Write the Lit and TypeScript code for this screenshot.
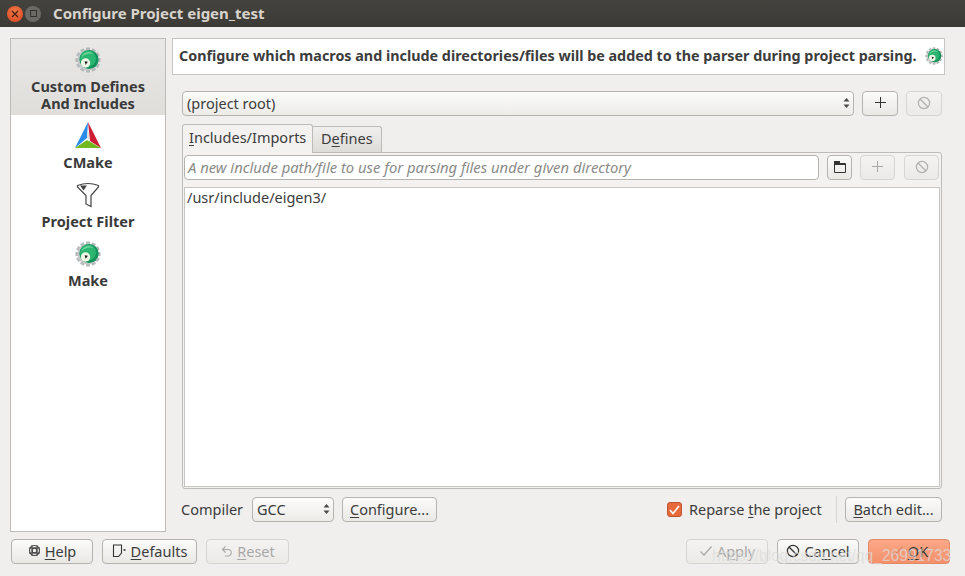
import { LitElement, html, css, svg } from "lit";
import { customElement } from "lit/decorators.js";

const gear = (size: number) => {
  const teeth = Array.from({ length: 12 }, (_, i) => i * 30);
  return html`<svg class="ico" width=${size} height=${size} viewBox="0 0 26 26">
    ${teeth.map((a) => svg`<rect x="11" y="0.5" width="4" height="5" fill="#b4b8ba" transform="rotate(${a} 13 13)"/>`)}
    <circle cx="13" cy="13" r="10.5" fill="#c6c9ca"/>
    <circle cx="14" cy="12.5" r="9.6" fill="#12935a"/>
    <circle cx="13" cy="11.5" r="8" fill="#2bb571"/>
    <path d="M6.5 11a7 6.5 0 0 1 12 -4a9 6 0 0 0 -12 4z" fill="#6fd69a"/>
    <circle cx="10.5" cy="16" r="4.7" fill="#eef6e6"/>
    <path d="M9.6 14.2l3.3 .5l-2.2 3z" fill="#1d1d1d"/>
  </svg>`;
};
const cmake = html`<svg class="ico" width="28" height="28" viewBox="0 0 28 28">
  <path d="M14 1L1 27L13 17z" fill="#2a8ce8"/>
  <path d="M14 1L27 27L16 20z" fill="#cc1f36"/>
  <path d="M1 27H27L13 19z" fill="#72b81f"/>
  <path d="M14 9L13 17L16 20z" fill="#dcdcdc"/>
</svg>`;
const funnel = html`<svg class="ico" width="24" height="26" viewBox="0 0 24 26" fill="none">
  <path d="M1.5 3.5Q12 -.5 22.5 3.5V5L15 13.5V24.5L10 22V13.5L1.5 5z" fill="#fff" stroke="#444" stroke-width="1.2"/>
  <path d="M4 3.5H11L7.5 8.5z" fill="#444"/>
</svg>`;
const plus = (c: string) => html`<svg width="13" height="13" viewBox="0 0 13 13"><path d="M6.5 1v11M1 6.5h11" stroke=${c} stroke-width="1"/></svg>`;
const ban = (c: string, s = 14) => html`<svg width=${s} height=${s} viewBox="0 0 14 14" fill="none" stroke=${c} stroke-width="1.2"><circle cx="7" cy="7" r="5.6"/><path d="M3 3l8 8"/></svg>`;
const spin = html`<svg class="spin" width="7" height="14" viewBox="0 0 7 14"><path d="M3.5 2L6.5 5.5H.5zM3.5 12L.5 8.5H6.5z" fill="#4a4a4a"/></svg>`;
const folder = html`<svg width="14" height="14" viewBox="0 0 14 14" fill="none" stroke="#333"><path d="M1.5 12.5V1.5H6.5V3.5H12.5V12.5zM1.5 4.5H12.5"/><path d="M1.5 1.5H6.5V4H1.5z" fill="#333"/></svg>`;
const help = html`<svg width="13" height="13" viewBox="0 0 13 13" fill="none" stroke="#444" stroke-width="1.1"><circle cx="6.5" cy="6.5" r="5"/><circle cx="6.5" cy="6.5" r="2.4"/><path d="M4 1v11M9 1v11M1 4h11M1 9h11" stroke-width="1"/></svg>`;
const doc = html`<svg width="15" height="14" viewBox="0 0 15 14" fill="none" stroke="#333" stroke-width="1.1"><path d="M1.5 1H9.5V9L6.5 12.5H1.5z"/><path d="M11.5 6l2 0" stroke-width="1.6"/></svg>`;
const undo = html`<svg width="13" height="13" viewBox="0 0 13 13" fill="none" stroke="#a8a8a6" stroke-width="1.1"><path d="M3 5.5H8a3.2 3.2 0 0 1 0 6.5H5M5.5 2.5L2.5 5.5L5.5 8.5"/></svg>`;
const check = (c: string) => html`<svg width="14" height="12" viewBox="0 0 14 12" fill="none" stroke=${c} stroke-width="1.2"><path d="M1.5 6.5L5 10L12.5 1.5"/></svg>`;

@customElement("app-root")
export class AppRoot extends LitElement {
  static styles = css`
    :host { display: block; width: 965px; height: 576px; overflow: hidden; position: relative; background: #f0efed;
      font-family: "Noto Sans", "Open Sans", sans-serif; font-size: 14.5px; color: #3c3c3c; }
    * { box-sizing: border-box; }
    u { text-underline-offset: 2px; text-decoration-thickness: 1px; }
    .title { height: 27px; background: linear-gradient(#45433e, #3b3a36); display: flex; align-items: center; padding-left: 7px; }
    .wb { width: 16px; height: 16px; border-radius: 50%; display: flex; align-items: center; justify-content: center; }
    .close { background: radial-gradient(circle at 50% 35%, #f0784a, #d8451f); }
    .max { background: #6a6964; margin-left: 2px; }
    .max i { display: block; width: 7px; height: 7px; border: 1px solid #33322f; }
    .ttl { margin-left: 12px; font-weight: 700; font-size: 15px; color: #d8d4cc; white-space: nowrap; padding-bottom: 1px; }
    .main { display: flex; padding: 11px 20px 0 10px; height: 505px; }
    .side { width: 156px; height: 494px; background: #fff; border: 1px solid #bdbcb8; flex: none; }
    .item { display: flex; flex-direction: column; align-items: center; font-weight: 700; font-size: 14.5px; line-height: 17px; text-align: center; color: #3a3a3a; height: 59px; justify-content: flex-end; }
    .item.first { height: 56px; }
    .item.sel { background: linear-gradient(#e9e8e6, #dfdedb); height: 76px; padding-bottom: 3px; }
    .ico { display: block; margin-bottom: 5px; }
    .head .ico { margin: 2px -1px 0 0; }
    .content { width: 773px; margin-left: 6px; flex: none; }
    .head { height: 37px; background: #fff; border: 1px solid #c6c5c1; display: flex; align-items: center; justify-content: space-between; padding: 0 2px 3px 6px; font-weight: 700; font-size: 14.33px; white-space: nowrap; }
    .body { padding: 16px 3px 0 10px; }
    .row { display: flex; align-items: center; }
    .btn { height: 25px; border: 1px solid #b5b3ae; border-radius: 4px; background: linear-gradient(#fbfbfa, #e9e8e5); display: flex; align-items: center; justify-content: center; gap: 4px; flex: none; color: #3c3c3c; padding: 0 0 2px; }
    .btn.off { border-color: #d6d5d1; background: linear-gradient(#f4f3f2, #ebeae7); color: #a8a8a6; }
    .sq { width: 36px; }
    .combo { height: 25px; border: 1px solid #b5b3ae; border-radius: 4px; background: linear-gradient(#fcfcfb, #ecebe8); display: flex; align-items: center; justify-content: space-between; padding: 0 3px 2px 4px; flex: none; }
    .tabs { display: flex; align-items: flex-end; margin-top: 8px; height: 28px; position: relative; z-index: 1; }
    .tab { height: 26px; padding: 0 8px 4px; border: 1px solid #bdbcb8; border-bottom: none; border-left: none; border-radius: 0 3px 0 0; background: linear-gradient(#f0efed, #dedcd9); display: flex; align-items: center; }
    .tab.on { width: 131px; padding: 0 6px 4px; background: #f3f2f1; border-left: 1px solid #bdbcb8; border-radius: 3px 3px 0 0; margin-bottom: -1px; height: 29px; white-space: nowrap; }
    .pane { height: 337px; width: 760px; border: 1px solid #bdbcb8; border-radius: 0 3px 3px 3px; padding: 2px 1px 1px 0; background: #f3f2f1; }
    .input { width: 635px; height: 25px; flex: none; margin-left: 1px; background: #fff; border: 1px solid #b5b3ae; border-radius: 4px; padding: 0 3px 2px; font-style: italic; font-size: 14.8px; color: #8b8b89; display: flex; align-items: center; white-space: nowrap; }
    .list { height: 300px; margin: 7px 0 0 1px; width: 756px; background: #fff; border: 1px solid #c6c5c1; padding: 0 2px; line-height: 19px; }
    .foot { margin-top: 8px; height: 25px; }
    .lbl { width: 70px; margin-left: -1px; padding-bottom: 2px; }
    .rep { margin-left: 7px; width: 134px; white-space: nowrap; padding-bottom: 2px; }
    .cb { width: 15px; height: 15px; border-radius: 3px; background: #e9693a; border: 1px solid #b9552f; display: flex; align-items: center; justify-content: center; margin-left: 230px; flex: none; }
    .sep { width: 1px; height: 27px; background: #d6d5d1; margin: 0 8px 0 13px; flex: none; }
    .actions { display: flex; padding: 7px 15px 0 11px; }
    .actions .btn { width: 82px; }
    .ok { border-color: #e08a68 !important; background: linear-gradient(#fba888, #f4906b) !important; }
    .wm { position: absolute; left: 712px; top: 547px; font-family: "Liberation Sans", sans-serif; font-size: 15.6px; color: rgba(220,220,220,.72); white-space: nowrap; }
  `;

  render() {
    return html`
      <div class="title">
        <div class="wb close"><svg width="8" height="8" viewBox="0 0 8 8"><path d="M1 1l6 6M7 1l-6 6" stroke="#4a2012" stroke-width="1.4"/></svg></div>
        <div class="wb max"><i></i></div>
        <div class="ttl">Configure Project eigen_test</div>
      </div>
      <div class="main">
        <div class="side">
          <div class="item sel">${gear(26)}Custom Defines<br />And Includes</div>
          <div class="item first">${cmake}CMake</div>
          <div class="item">${funnel}Project Filter</div>
          <div class="item">${gear(26)}Make</div>
        </div>
        <div class="content">
          <div class="head"><span>Configure which macros and include directories/files will be added to the parser during project parsing.</span>${gear(18)}</div>
          <div class="body">
            <div class="row">
              <div class="combo" style="width:672px"><span>(project root)</span>${spin}</div>
              <div class="btn sq" style="margin-left:8px">${plus("#333")}</div>
              <div class="btn sq off" style="margin-left:8px">${ban("#b0b0ae")}</div>
            </div>
            <div class="tabs">
              <div class="tab on"><span><u>I</u>ncludes/Imports</span></div>
              <div class="tab">D<u>e</u>fines</div>
            </div>
            <div class="pane">
              <div class="row">
                <div class="input">A new include path/file to use for parsing files under given directory</div>
                <div class="btn" style="width:25px;margin-left:8px">${folder}</div>
                <div class="btn off" style="width:35px;margin-left:8px">${plus("#a8a8a6")}</div>
                <div class="btn off" style="width:35px;margin-left:9px">${ban("#b0b0ae")}</div>
              </div>
              <div class="list">/usr/include/eigen3/</div>
            </div>
            <div class="row foot">
              <span class="lbl">Compiler</span>
              <div class="combo" style="width:82px;margin-left:1px"><span>GCC</span>${spin}</div>
              <div class="btn" style="width:95px;margin-left:8px"><span><u>C</u>onfigure...</span></div>
              <div class="cb"><svg width="11" height="10" viewBox="0 0 11 10" fill="none" stroke="#fff" stroke-width="1.6"><path d="M1 5l3 3.5L10 1"/></svg></div>
              <span class="rep">Reparse <u>t</u>he project</span>
              <div class="sep"></div>
              <div class="btn" style="width:97px"><span><u>B</u>atch edit...</span></div>
            </div>
          </div>
        </div>
      </div>
      <div class="actions">
        <div class="btn">${help}<span><u>H</u>elp</span></div>
        <div class="btn" style="width:95px;margin-left:9px">${doc}<span><u>D</u>efaults</span></div>
        <div class="btn off" style="width:83px;margin-left:9px">${undo}<span><u>R</u>eset</span></div>
        <div class="btn off" style="margin-left:397px">${check("#a8a8a6")}<span>A<u>p</u>ply</span></div>
        <div class="btn" style="margin-left:9px">${ban("#333")}<span>Ca<u>n</u>cel</span></div>
        <div class="btn ok" style="margin-left:9px">${check("#d98a6a")}<span><u>O</u>K</span></div>
      </div>
      <div class="wm">https://blog.csdn.net/qq_26991733</div>
    `;
  }
}
